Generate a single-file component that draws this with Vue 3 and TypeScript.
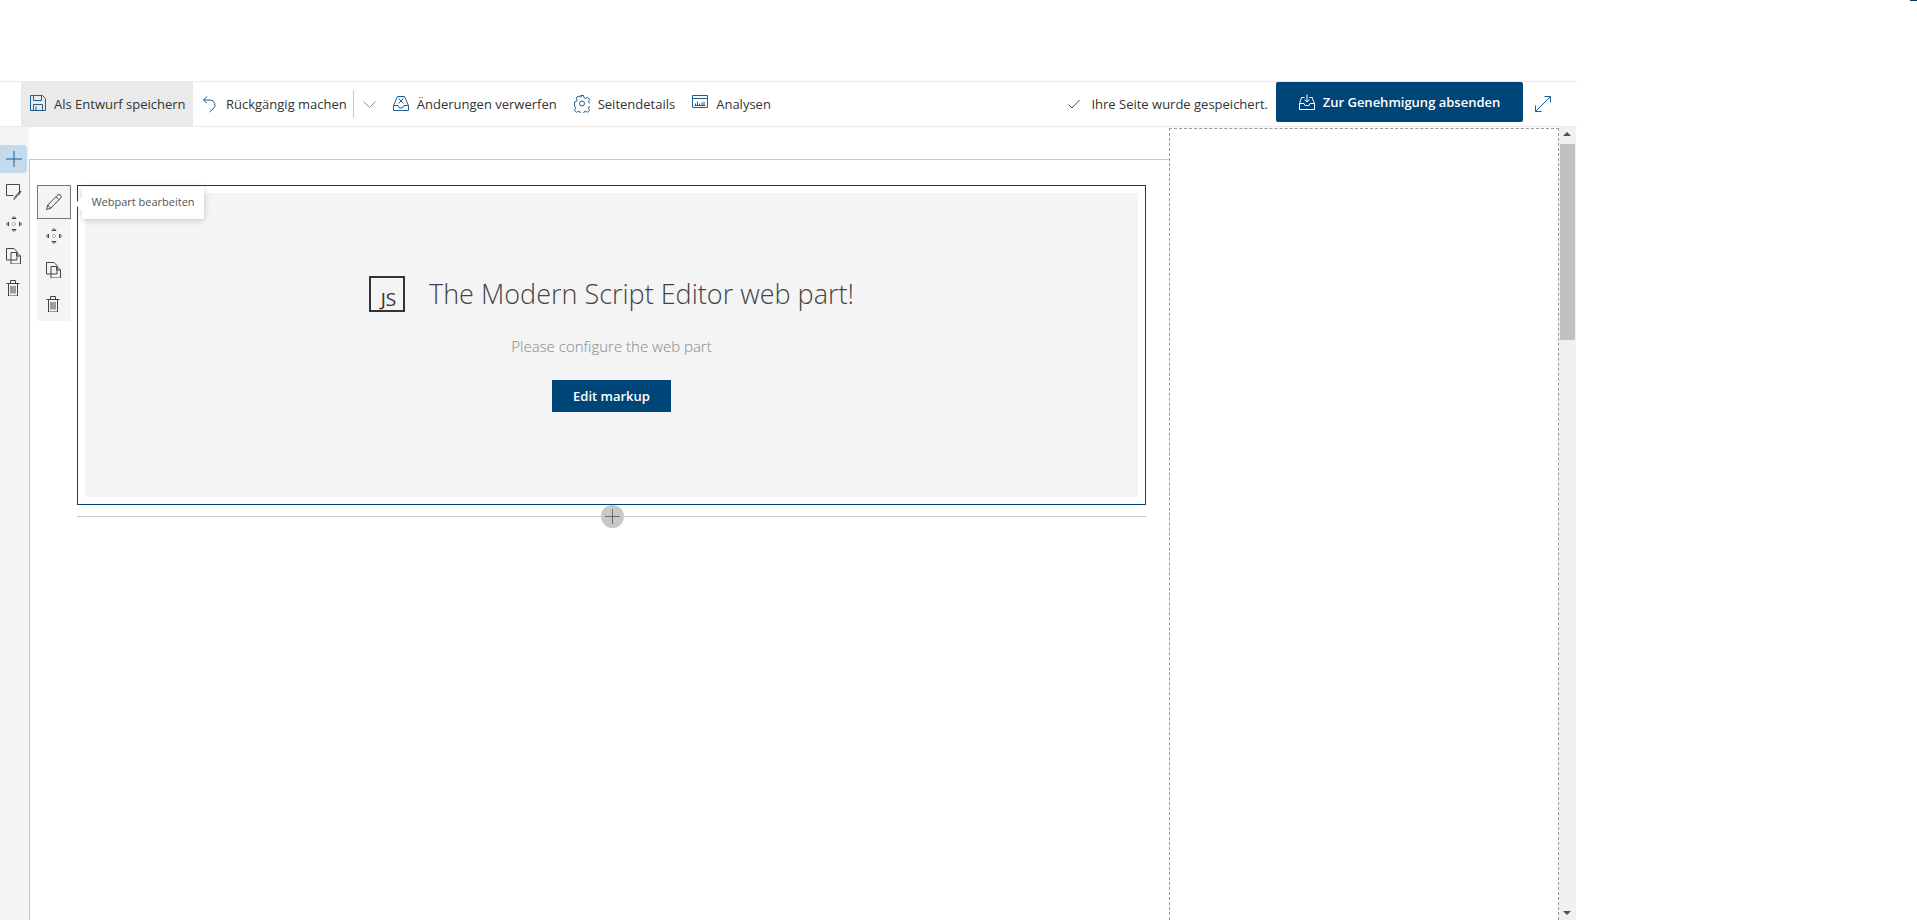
<script setup lang="ts">
interface Command {
  label: string
  icon: string
  active?: boolean
}

const icons: Record<string, string> = {
  save: 'M.5.5h12l3 3v12H.5zM3.5.5v5h8v-5M3.5 15.5v-6h9v6M6 11.5v4',
  undo: 'M5 1.5 1.5 5 5 8M1.5 5h6.5a5 5 0 0 1 3 9L7.500 17',
  discard: 'M.5 10.500h4.500l1.500 2.500h3l1.500-2.500h4.500v5H.5zM.5 10.500 4.500 1.500h7l4 9M5.500 3.500l5 5M10.500 3.500l-5 5',
  gear: 'M6.500.5h3l.5 2.200 1.500.7 2-1.100 2 2-1.100 2 .7 1.500 1.900.5v3l-1.900.5-.7 1.500 1.100 2-2 2-2-1.100-1.500.7-.5 1.600h-3l-.5-1.600-1.500-.7-2 1.100-2-2 1.100-2-.7-1.500L.5 10V7l1.900-.5.7-1.500-1.100-2 2-2 2 1.100 1.500-.7zM8 6a2.500 2.500 0 1 0 0 5 2.500 2.500 0 0 0 0-5z',
  analytics: 'M.5.5h15v12H.5zM.5 3.500h15M3.500 10.500v-2M5.500 10.500v-4M7.500 10.500v-2M10 10.500v-3M12 10.500v-4M2.500 10.500h11',
  check: 'M.5 5.500 4 9 11.500 1',
  expand: 'M.5 15.500 15.500.5M9.500.5h6v6M.5 9.500v6h6',
  plus: 'M8 0v16M0 8h16',
  edit: 'M.5.5h13v10M.5.5v11h7M15 7.500 9.500 14l-1.500 1.500.5-2 5.500-6.500z',
  move: 'M8 .5 6 2.500h4zM8 15.500l-2-2h4zM.5 8l2-2v4zM15.500 8l-2-2v4zM6 8h.8M9.200 8h.8M8 6v.8M8 9.200v.8',
  copy: 'M.5.5h7.500l3 3V12h-10.500zM5 4.500h6l3.500 3.500v8H5zM10.500 4.500v3.500h4',
  trash: 'M2.500 3.500v12.500h9V3.500M.5 3.500h13M4.500 3.500V.5h5v3M5 6v7.500M7 6v7.500M9 6v7.500',
  pencil: 'M.5 15.500l1.200-4.500 9.800-9.800a1.800 1.800 0 0 1 3 3L4.700 14.300zM1.700 11l3 3.300M10 2.700l3 3',
}

const commands: Command[] = [
  { label: 'Als Entwurf speichern', icon: 'save', active: true },
  { label: 'Rückgängig machen', icon: 'undo' },
]

const moreCommands: Command[] = [
  { label: 'Änderungen verwerfen', icon: 'discard' },
  { label: 'Seitendetails', icon: 'gear' },
  { label: 'Analysen', icon: 'analytics' },
]

const railIcons = ['edit', 'move', 'copy', 'trash']
const partIcons = ['pencil', 'move', 'copy', 'trash']
</script>

<template>
  <div class="page">
    <i class="corner"></i>
    <div class="shell">
      <div class="toolbar">
        <button
          v-for="cmd in commands"
          :key="cmd.label"
          class="cmd"
          :class="{ 'cmd--active': cmd.active }"
        >
          <svg class="ico" viewBox="0 0 16 18"><path :d="icons[cmd.icon]" /></svg>
          {{ cmd.label }}
        </button>
        <span class="split"></span>
        <svg class="chevron" width="13" height="7" viewBox="0 0 13 7"><path d="M.5.5l6 6 6-6" /></svg>
        <button v-for="cmd in moreCommands" :key="cmd.label" class="cmd cmd--more">
          <svg class="ico" viewBox="0 0 16 18"><path :d="icons[cmd.icon]" /></svg>
          {{ cmd.label }}
        </button>
        <div class="status">
          <svg class="check" width="12" height="10" viewBox="0 0 12 10"><path :d="icons.check" /></svg>
          <span>Ihre Seite wurde gespeichert.</span>
        </div>
        <button class="submit">
          <svg width="16" height="16" viewBox="0 0 16 16">
            <path d="M.5 9.500 2.500 3.500h3M13.500 3.500h-3l0 0 2.500 0 2.500 6v6H.5v-6h4.500l1 2h4l1-2h4.500M8 .5v7M5.500 5.500 8 8l2.500-2.500" />
          </svg>
          Zur Genehmigung absenden
        </button>
        <svg class="expand" width="16" height="16" viewBox="0 0 16 16"><path :d="icons.expand" /></svg>
      </div>

      <div class="body">
        <aside class="rail">
          <div class="rail__add">
            <svg class="ico ico--add" viewBox="0 0 16 16"><path :d="icons.plus" /></svg>
          </div>
          <div v-for="name in railIcons" :key="name" class="rail__item">
            <svg class="ico ico--gray" viewBox="0 0 16 16"><path :d="icons[name]" /></svg>
          </div>
        </aside>

        <main class="canvas">
          <section class="section">
            <div class="part-row">
              <div class="part-tools">
                <div
                  v-for="(name, i) in partIcons"
                  :key="name"
                  class="part-tools__item"
                  :class="{ 'part-tools__item--hover': i === 0 }"
                >
                  <svg class="ico ico--gray" viewBox="0 0 16 16"><path :d="icons[name]" /></svg>
                </div>
                <div class="tip">Webpart bearbeiten</div>
              </div>
              <div class="part">
                <div class="part__inner">
                  <div class="heading">
                    <div class="js"><span>JS</span></div>
                    <h1>The Modern Script Editor web part!</h1>
                  </div>
                  <p>Please configure the web part</p>
                  <button class="markup">Edit markup</button>
                </div>
              </div>
            </div>
            <div class="add-line">
              <span class="add-line__btn">
                <svg width="15" height="15" viewBox="0 0 16 16"><path :d="icons.plus" /></svg>
              </span>
            </div>
          </section>
        </main>

        <div class="side"></div>

        <div class="scroll">
          <i class="scroll__up"></i>
          <div class="scroll__thumb"></div>
          <i class="scroll__down"></i>
        </div>
      </div>
    </div>
  </div>
</template>

<style>
html,
body {
  margin: 0;
  background: #fff;
  overflow: hidden;
}
</style>

<style scoped>
.page {
  position: relative;
  width: 1917px;
  height: 920px;
  overflow: hidden;
  background: #fff;
  font-family: "Open Sans", "Noto Sans", sans-serif;
  color: #333;
}

.corner {
  position: absolute;
  top: 0;
  right: 0;
  width: 7px;
  height: 1px;
  background: #003a6c;
}

.shell {
  width: 1577px;
  height: 920px;
  padding-top: 81px;
  box-sizing: border-box;
  display: flex;
  flex-direction: column;
}

.toolbar {
  height: 46px;
  box-sizing: border-box;
  flex-shrink: 0;
  border-top: 1px solid #eaeaea;
  border-bottom: 1px solid #eaeaea;
  padding-left: 21px;
  display: flex;
  align-items: stretch;
  font-size: 13px;
}

button {
  border: 0;
  padding: 0;
  background: none;
  font: inherit;
  color: inherit;
}

.ico {
  width: 16px;
  height: 18px;
  flex-shrink: 0;
}

.ico path,
.chevron path,
.check path,
.expand path {
  fill: none;
  stroke: #1f5f92;
  stroke-width: 1;
}

.chevron path {
  stroke: #8a8a8a;
}

.cmd {
  display: flex;
  align-items: center;
  gap: 8px;
  padding: 0 6px 0 9px;
  white-space: nowrap;
}

.cmd--active {
  background: #eaeaea;
  width: 172px;
  box-sizing: border-box;
}

.cmd--more {
  padding: 0;
  margin-right: 17px;
}

.split {
  width: 1px;
  height: 28px;
  margin-top: 8px;
  background: #c8c8c8;
}

.chevron {
  align-self: center;
  margin: 0 17px 0 9px;
}

.status {
  margin-left: auto;
  display: flex;
  align-items: center;
  gap: 11px;
  white-space: nowrap;
}

.submit {
  display: flex;
  align-items: center;
  justify-content: center;
  gap: 8px;
  width: 247px;
  height: 40px;
  margin-left: 8px;
  border-radius: 2px;
  background: #004578;
  color: #fff;
  font-weight: 600;
}

.submit path {
  fill: none;
  stroke: #fff;
  stroke-width: 1;
}

.expand {
  align-self: center;
  margin: 0 26px 0 12px;
}

.body {
  flex: 1;
  min-height: 0;
  display: flex;
}

.rail {
  width: 29px;
  flex-shrink: 0;
  padding-top: 18px;
  background: #f4f4f4;
  box-sizing: border-box;
}

.rail__add {
  width: 27px;
  height: 28px;
  border-radius: 0 4px 4px 0;
  background: #c3d9ec;
  display: flex;
  align-items: center;
  justify-content: center;
}

.rail__item {
  width: 27px;
  height: 32px;
  display: flex;
  align-items: center;
  justify-content: center;
}

.rail__add + .rail__item {
  margin-top: 3px;
}

.ico--add,
.ico--gray {
  height: 16px;
}

.ico--gray path {
  stroke: #444;
}

.canvas {
  width: 1140px;
  flex-shrink: 0;
  box-sizing: border-box;
  margin-top: 32px;
  border-top: 1px solid #c8c8c8;
  border-left: 1px solid #c8c8c8;
}

.section {
  padding: 25px 23px 0 7px;
}

.part-row {
  display: flex;
  gap: 6px;
}

.part-tools {
  position: relative;
  width: 34px;
  height: 136px;
  background: #f4f4f4;
}

.part-tools__item {
  height: 34px;
  box-sizing: border-box;
  display: flex;
  align-items: center;
  justify-content: center;
}

.part-tools__item--hover {
  border: 1px solid #767676;
}

.tip {
  position: absolute;
  top: 2px;
  left: 45px;
  width: 122px;
  height: 32px;
  line-height: 30px;
  text-align: center;
  font-size: 11px;
  color: #555;
  background: #fff;
  border-radius: 2px;
  box-shadow: 0 1px 6px rgba(0, 0, 0, 0.2);
  white-space: nowrap;
}

.tip::before {
  content: "";
  position: absolute;
  left: -5px;
  top: 12px;
  width: 10px;
  height: 10px;
  background: #fff;
  transform: rotate(45deg);
}

.part {
  flex: 1;
  height: 320px;
  box-sizing: border-box;
  border: 1px solid #004578;
  padding: 7px;
}

.part__inner {
  height: 100%;
  background: #f4f4f4;
  display: flex;
  flex-direction: column;
  align-items: center;
  padding-top: 83px;
  box-sizing: border-box;
}

.heading {
  display: flex;
  align-items: center;
  gap: 24px;
}

.js {
  width: 36px;
  height: 36px;
  box-sizing: border-box;
  border: 2px solid #333;
  display: flex;
  align-items: flex-end;
  justify-content: center;
  font-size: 19px;
  line-height: 22px;
  padding-left: 3px;
}

h1 {
  margin: 0;
  font-size: 27px;
  line-height: 36px;
  font-weight: 300;
  color: #444;
  white-space: nowrap;
}

p {
  margin: 22px 0 0;
  font-size: 15px;
  line-height: 24px;
  font-weight: 300;
  color: #888;
}

.markup {
  width: 119px;
  height: 32px;
  margin-top: 22px;
  background: #004578;
  color: #fff;
  font-size: 13px;
  font-weight: 600;
}

.add-line {
  margin: 11px 0 0 40px;
  height: 1px;
  background: #c8c8c8;
  position: relative;
}

.add-line__btn {
  position: absolute;
  left: 50%;
  top: -11px;
  width: 23px;
  height: 23px;
  margin-left: -11px;
  border-radius: 50%;
  background: #c8c8c8;
  display: flex;
  align-items: center;
  justify-content: center;
}

.add-line__btn path {
  fill: none;
  stroke: #666;
  stroke-width: 1;
}

.side {
  width: 390px;
  flex-shrink: 0;
  box-sizing: border-box;
  margin-top: 1px;
  border: 1px dashed #999;
  border-bottom: 0;
}

.scroll {
  width: 17px;
  flex-shrink: 0;
  background: #f0f0f0;
  position: relative;
}

.scroll__thumb {
  margin: 17px 1px 0;
  height: 196px;
  background: #c1c1c1;
}

.scroll__up,
.scroll__down {
  position: absolute;
  left: 4px;
  width: 0;
  height: 0;
  border-left: 4px solid transparent;
  border-right: 4px solid transparent;
}

.scroll__up {
  top: 5px;
  border-bottom: 4px solid #505050;
}

.scroll__down {
  bottom: 5px;
  border-top: 4px solid #505050;
}
</style>
